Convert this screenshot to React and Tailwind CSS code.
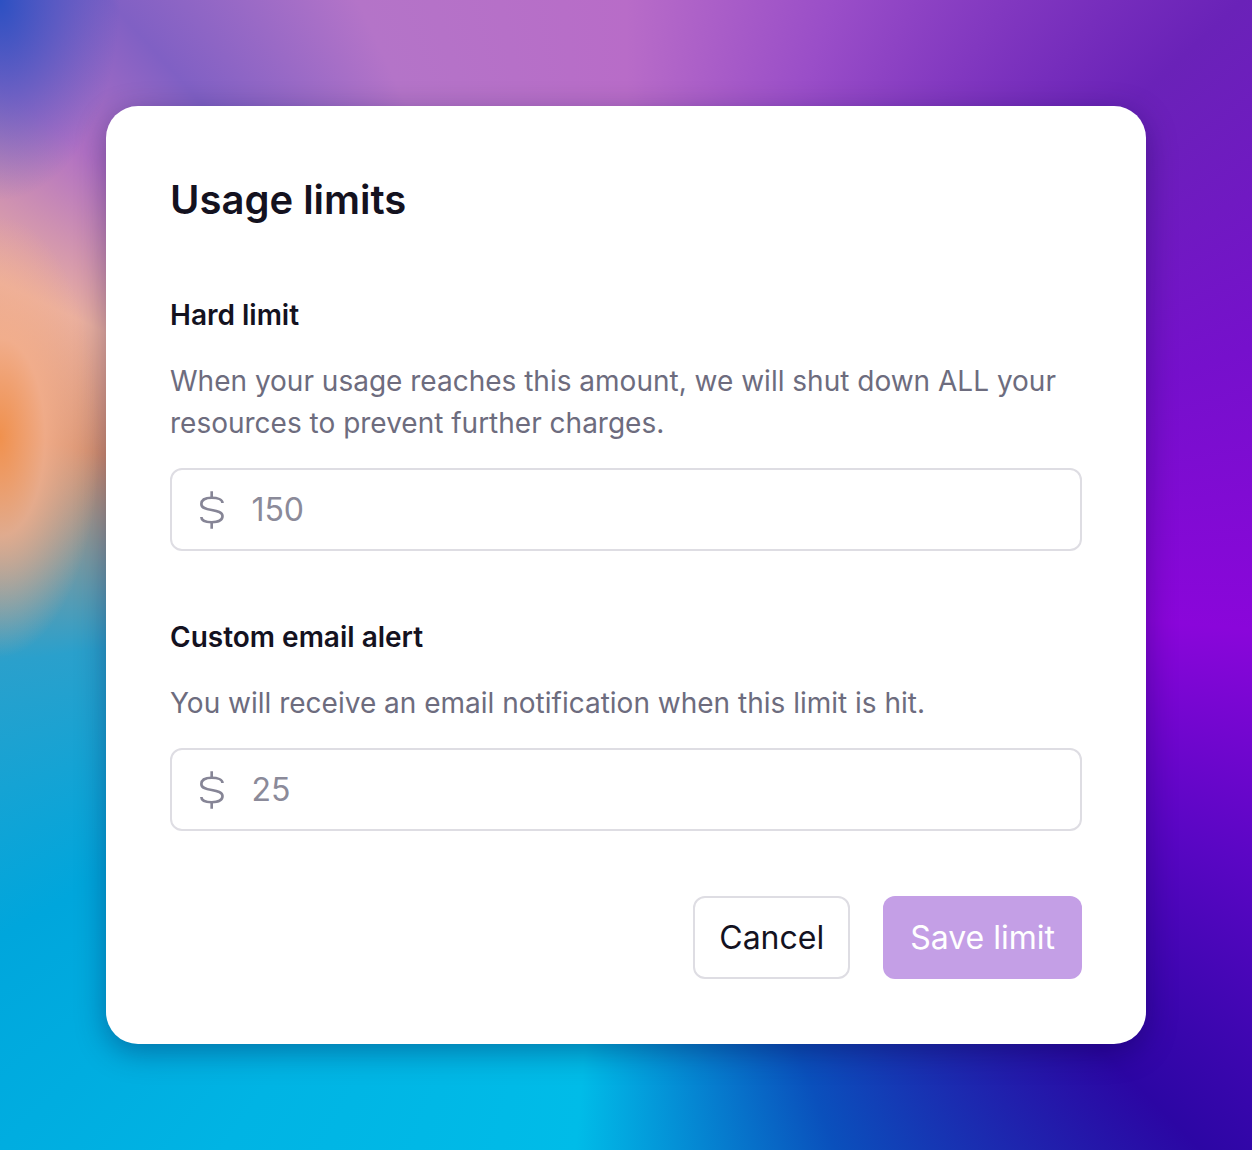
import React from 'react'

const DollarIcon = () => (
    <svg width="27" height="40" viewBox="0 0 27 40" fill="none" stroke="#868596" strokeWidth="2.8" strokeLinecap="butt">
        <path d="M13.5 0V7M13.5 33V40" />
        <path d="M25 12.5C25 9 20 7 13.5 7C7 7 2.5 9.2 2.5 13.5C2.5 18 7.5 19 13.5 20C19.5 21 25 22.2 25 26.5C25 31 20 33 13.5 33C7 33 2.5 31 2.5 27.5" />
    </svg>
)

const AmountInput = ({ value }) => (
    <div className="mt-[24px] flex h-[83px] items-center gap-[27px] rounded-[12px] border-2 border-[#dedde3] pl-[27px]">
        <DollarIcon />
        <input
            type="text"
            defaultValue={value}
            className="w-full bg-transparent text-[32px] text-[#8b8a99] outline-none"
        />
    </div>
)

const Section = ({ label, description, value, className }) => (
    <div className={className}>
        <h2 className="text-[28px] leading-[36px] font-semibold text-[#14121f]">{label}</h2>
        <p className="mt-[27px] text-[28px] leading-[42px] text-[#6d6c7e]">{description}</p>
        <AmountInput value={value} />
    </div>
)

export default function App() {
    return (
        <div
            className="flex min-h-[1150px] w-full items-center justify-center bg-[#7a30c8] bg-[image:radial-gradient(ellipse_120px_200px_at_0%_0%,#2c50c2_0%,rgba(44,80,194,0)_100%),radial-gradient(ellipse_100px_220px_at_0%_38%,#f0914e_0%,rgba(245,176,140,0.8)_45%,rgba(245,176,140,0)_100%),conic-gradient(from_0deg_at_50%_50%,#b86cc8_0deg,#9a4ec8_20deg,#6a22b8_47deg,#7610cc_70deg,#8a06da_95deg,#5a06c4_115deg,#2c06a4_135deg,#0a50bc_160deg,#00bce8_185deg,#00b4e4_215deg,#00a6dc_240deg,#2aa0cc_262deg,#d49070_283deg,#eab0a0_295deg,#b070c4_308deg,#8060c4_318deg,#b474c8_335deg,#b86cc8_360deg)]"
            style={{ fontFamily: 'Inter, "Noto Sans", sans-serif' }}
        >
            <div className="w-[1040px] rounded-[32px] bg-white px-16 pt-16 pb-[65px] shadow-[0_8px_30px_rgba(10,0,60,0.35)]">
                <h1 className="text-[40px] leading-[60px] font-semibold text-[#14121f]">Usage limits</h1>

                <Section
                    className="mt-[67px]"
                    label="Hard limit"
                    description={<>When your usage reaches this amount, we will shut down ALL your<br />resources to prevent further charges.</>}
                    value="150"
                />

                <Section
                    className="mt-[68px]"
                    label="Custom email alert"
                    description="You will receive an email notification when this limit is hit."
                    value="25"
                />

                <div className="mt-[65px] flex justify-end gap-[33px]">
                    <button className="h-[83px] rounded-[12px] border-2 border-[#dedde3] bg-white px-[24px] text-[32px] text-[#14121f]">
                        Cancel
                    </button>
                    <button className="h-[83px] rounded-[12px] bg-[#c49fe6] px-[27px] text-[32px] text-white">
                        Save limit
                    </button>
                </div>
            </div>
        </div>
    )
}
